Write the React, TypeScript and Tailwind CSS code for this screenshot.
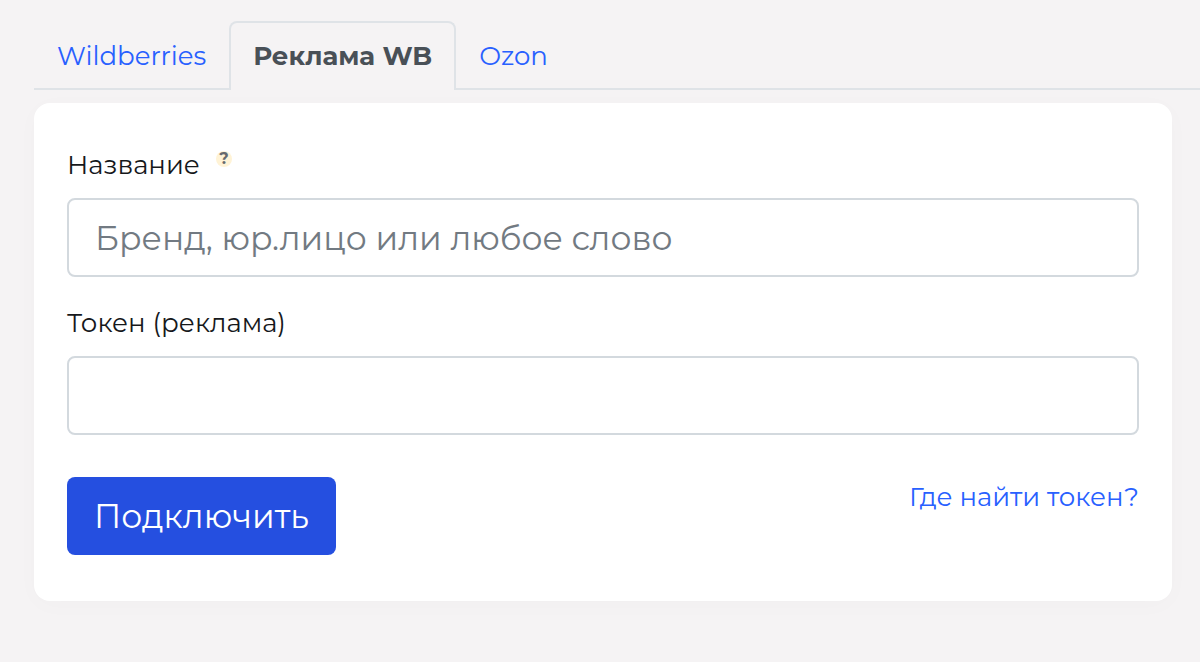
import React from 'react';

const tabs = [
  { name: 'Wildberries', href: '#wildberries' },
  { name: 'Реклама WB', href: '#wb-ads', active: true },
  { name: 'Ozon', href: '#ozon' },
];

const inputClass =
  'block h-[79px] w-full rounded-lg border-2 border-[#d3d9de] bg-white px-[26px] text-[33px] text-[#212529] outline-none placeholder:text-[#727a82] focus:border-[#2860ff]';

const App = () => {
  return (
    <main className="min-h-screen bg-[#f5f3f4] pt-[21px] pl-[34px] pb-[60px] font-[Montserrat,Inter,sans-serif] text-[26px] leading-[40px] text-[#16181b]">
      <nav className="flex" aria-label="Подключения">
        {tabs.map((tab) => (
          <a
            key={tab.name}
            href={tab.href}
            aria-current={tab.active ? 'page' : undefined}
            className={
              tab.active
                ? 'rounded-t-lg border-2 border-b-0 border-[#dfe3e7] px-[22px] pt-[13px] pb-[14px] font-bold text-[#495057]'
                : 'border-b-2 border-[#dfe3e7] px-[23px] pt-[15px] pb-[12px] text-[#2860ff]'
            }
          >
            {tab.name}
          </a>
        ))}
        <div className="flex-1 border-b-2 border-[#dfe3e7]" />
      </nav>

      <form
        onSubmit={(e) => e.preventDefault()}
        className="mt-[13px] mr-[28px] rounded-2xl bg-white px-[33px] pt-[42px] pb-[46px] shadow-[0_4px_24px_rgba(0,0,0,0.02)]"
      >
        <div className="flex items-start">
          <label htmlFor="name">Название</label>
          <button
            type="button"
            aria-label="Подсказка"
            className="mt-[6px] ml-4 flex size-4 items-center justify-center rounded-full bg-[#fff3d6] text-[16px] leading-[14px] font-bold text-[#666a6d]"
          >
            ?
          </button>
        </div>
        <input
          id="name"
          type="text"
          placeholder="Бренд, юр.лицо или любое слово"
          className={`mt-[13px] ${inputClass}`}
        />

        <label htmlFor="token" className="mt-[26px] block">
          Токен (реклама)
        </label>
        <input id="token" type="text" className={`mt-[13px] ${inputClass}`} />

        <div className="mt-[42px] flex items-start justify-between">
          <button
            type="submit"
            className="h-[78px] rounded-lg bg-[#254fe0] px-[27px] text-[33px] text-white"
          >
            Подключить
          </button>
          <a href="#help" className="text-[#2860ff]">
            Где найти токен?
          </a>
        </div>
      </form>
    </main>
  );
};

export default App;
